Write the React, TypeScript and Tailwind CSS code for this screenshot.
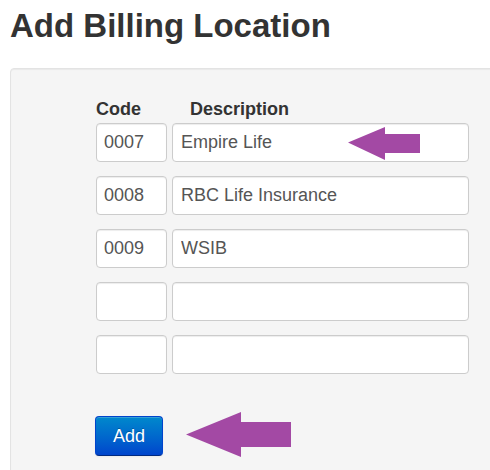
import React from "react";

const rows = [
  { code: "0007", desc: "Empire Life" },
  { code: "0008", desc: "RBC Life Insurance" },
  { code: "0009", desc: "WSIB" },
  { code: "", desc: "" },
  { code: "", desc: "" },
];

export default function App() {
  return (
    <div
      className="relative h-[470px] w-[490px] overflow-hidden bg-white pl-[10px] text-[#333]"
      style={{ fontFamily: '"Liberation Sans", Arial, Helvetica, sans-serif' }}
    >
      <h1 className="mt-[6px] text-[33px] font-bold leading-[40px] text-[#333]">
        Add Billing Location
      </h1>

      {/* Well panel */}
      <div className="mt-[22px] w-[520px] rounded-[4px] border border-[#e3e3e3] bg-[#f5f5f5] pb-[60px] pl-[85px] pt-[30px] shadow-[inset_0_1px_1px_rgba(0,0,0,0.05)]">
        <div className="flex text-[18px] font-bold leading-[20px]">
          <span className="w-[94px]">Code</span>
          <span>Description</span>
        </div>

        <div className="mt-[4px] flex flex-col gap-[14px]">
          {rows.map((r, i) => (
            <div key={i} className="flex gap-[5px]">
              <input
                readOnly
                value={r.code}
                className="h-[39px] w-[71px] rounded-[4px] border border-[#ccc] bg-white px-[7px] text-[18px] text-[#555] shadow-[inset_0_1px_1px_rgba(0,0,0,0.075)] outline-none"
              />
              <input
                readOnly
                value={r.desc}
                className="h-[39px] w-[297px] rounded-[4px] border border-[#ccc] bg-white px-[8px] text-[18px] text-[#555] shadow-[inset_0_1px_1px_rgba(0,0,0,0.075)] outline-none"
              />
            </div>
          ))}
        </div>

        <button className="mt-[42px] h-[40px] w-[68px] -translate-x-[1px] rounded-[4px] border border-[#0044cc] border-b-[#002a80] bg-gradient-to-b from-[#0088cc] to-[#0044cc] text-[18px] text-white shadow-[inset_0_1px_0_rgba(255,255,255,0.2),0_1px_2px_rgba(0,0,0,0.05)] [text-shadow:0_-1px_0_rgba(0,0,0,0.25)]">
          Add
        </button>
      </div>

      {/* Annotation arrows */}
      <svg
        className="pointer-events-none absolute left-0 top-0"
        width="490"
        height="470"
        viewBox="0 0 490 470"
      >
        <polygon
          points="348,142.5 385,127 385,134 420,134 420,153 385,153 385,160"
          fill="#a349a4"
        />
        <polygon
          points="186,434.5 241,412 241,422 291,422 291,447 241,447 241,457"
          fill="#a349a4"
        />
      </svg>
    </div>
  );
}
